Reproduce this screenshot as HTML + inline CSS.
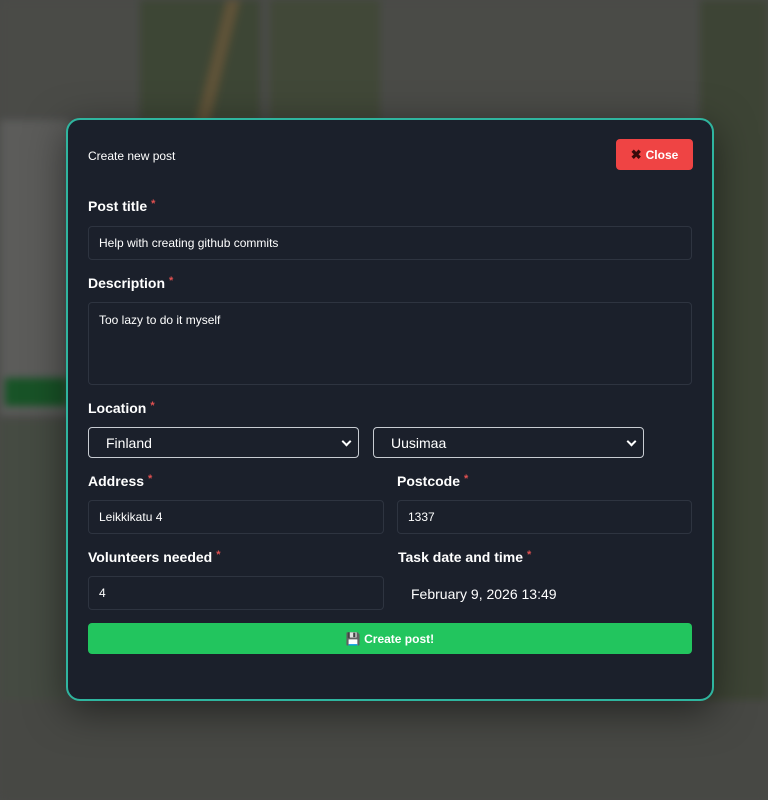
<!DOCTYPE html>
<html><head><meta charset="utf-8"><style>
*{box-sizing:border-box;margin:0;padding:0}
body{width:768px;height:800px;overflow:hidden;position:relative;font-family:"Liberation Sans",Arial,sans-serif;background:#5e5f5b}
.bg{position:absolute;inset:0;filter:blur(4px)}
.bg div{position:absolute}
.ov{position:absolute;inset:0;background:rgba(0,0,0,0.22)}
.modal{position:absolute;left:66px;top:118px;width:648px;height:583px;background:#1b202b;border:2px solid #2fb59f;border-radius:14px;box-shadow:0 10px 40px rgba(0,0,0,.5);color:#fff}
.a{position:absolute}
.lbl{font-weight:bold;font-size:14px}
.lbl span{color:#e05050;font-size:11px;vertical-align:top;margin-left:4px}
.inp{position:absolute;border:1px solid #2e3440;border-radius:4px;background:#1b202b;font-size:12px;padding-left:10px;display:flex;align-items:center}
.sel{position:absolute;border:1.5px solid #c8ccd2;border-radius:4px;background:#1b202b;font-size:14px;padding-left:17px;display:flex;align-items:center}
.sel:after{content:"";position:absolute;right:8px;top:10px;width:5px;height:5px;border-right:2px solid #fff;border-bottom:2px solid #fff;transform:rotate(45deg)}
</style></head><body>
<div class="bg">
<div style="left:0;top:0;width:768px;height:800px;background:#5f605c"></div>
<div style="left:140px;top:0;width:120px;height:120px;background:#4f5a44"></div>
<div style="left:270px;top:0;width:110px;height:120px;background:#545d48"></div>
<div style="left:700px;top:0;width:68px;height:800px;background:#4f5844"></div>
<div style="left:210px;top:0;width:14px;height:130px;background:#7a6a48;transform:skewX(-14deg)"></div>
<div style="left:0;top:120px;width:70px;height:295px;background:#767674"></div>
<div style="left:5px;top:378px;width:62px;height:28px;background:#1f6b32"></div>
<div style="left:0;top:420px;width:66px;height:380px;background:#596055"></div>
<div style="left:0;top:700px;width:768px;height:100px;background:#5c5d58"></div>
</div>
<div class="ov"></div>
<div class="modal">
<div class="a" style="left:20px;top:29px;font-size:12px">Create new post</div>
<div class="a" style="left:548px;top:19px;width:77px;height:31px;background:#ef4444;border-radius:4px;font-weight:bold;font-size:12px;display:flex;align-items:center;justify-content:center"><span style="color:#3a0a0a;margin-right:4px;font-size:13px">✖</span>Close</div>
<div class="a lbl" style="left:20px;top:78px">Post title<span>*</span></div>
<div class="inp" style="left:20px;top:106px;width:604px;height:34px">Help with creating github commits</div>
<div class="a lbl" style="left:20px;top:155px">Description<span>*</span></div>
<div class="inp" style="left:20px;top:182px;width:604px;height:83px;align-items:flex-start;padding-top:10px">Too lazy to do it myself</div>
<div class="a lbl" style="left:20px;top:280px">Location<span>*</span></div>
<div class="sel" style="left:20px;top:307px;width:271px;height:31px">Finland</div>
<div class="sel" style="left:305px;top:307px;width:271px;height:31px">Uusimaa</div>
<div class="a lbl" style="left:20px;top:353px">Address<span>*</span></div>
<div class="a lbl" style="left:329px;top:353px">Postcode<span>*</span></div>
<div class="inp" style="left:20px;top:380px;width:296px;height:34px">Leikkikatu 4</div>
<div class="inp" style="left:329px;top:380px;width:295px;height:34px">1337</div>
<div class="a lbl" style="left:20px;top:429px">Volunteers needed<span>*</span></div>
<div class="a lbl" style="left:330px;top:429px">Task date and time<span>*</span></div>
<div class="inp" style="left:20px;top:456px;width:296px;height:34px">4</div>
<div class="a" style="left:343px;top:466px;font-size:14px">February 9, 2026 13:49</div>
<div class="a" style="left:20px;top:503px;width:604px;height:31px;background:#22c55e;border-radius:4px;font-weight:bold;font-size:12px;display:flex;align-items:center;justify-content:center">💾&nbsp;Create post!</div>
</div>
</body></html>
